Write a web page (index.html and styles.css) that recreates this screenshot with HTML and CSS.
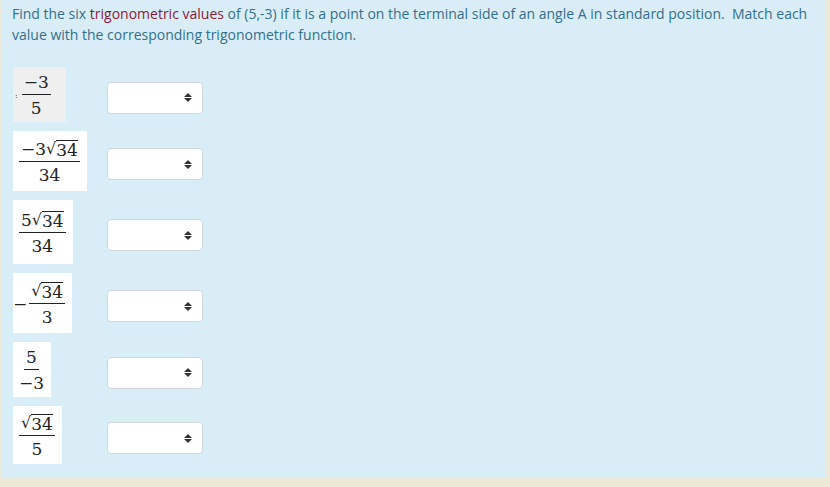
FILE: index.html
```html
<!DOCTYPE html>
<html>
<head>
    <title>Trigonometric values</title>
    <link rel="stylesheet" href="styles.css">
</head>
<body>
<div class="question">
    <p class="qtext">Find the six <span class="term">trigonometric values</span> of (5,-3) if it is a point on the terminal side of an angle A in standard position.&nbsp; Match each value with the corresponding trigonometric function.</p>

    <div class="match">
        <!-- row 1 -->
        <div class="expr expr-grey h55">
            <span class="dots">:</span>
            <span class="frac">
                <span class="num">&minus;3</span>
                <span class="den">5</span>
            </span>
        </div>
        <div class="choice"><span class="sort"><svg width="8" height="9" viewBox="0 0 8 9"><path d="M4 0L8 4H0Z"/><path d="M0 5H8L4 9Z"/></svg></span></div>

        <!-- row 2 -->
        <div class="expr h60">
            <span class="frac">
                <span class="num">&minus;3<span class="rad">&radic;</span><span class="radicand">34</span></span>
                <span class="den">34</span>
            </span>
        </div>
        <div class="choice"><span class="sort"><svg width="8" height="9" viewBox="0 0 8 9"><path d="M4 0L8 4H0Z"/><path d="M0 5H8L4 9Z"/></svg></span></div>

        <!-- row 3 -->
        <div class="expr h64">
            <span class="frac">
                <span class="num">5<span class="rad">&radic;</span><span class="radicand">34</span></span>
                <span class="den">34</span>
            </span>
        </div>
        <div class="choice"><span class="sort"><svg width="8" height="9" viewBox="0 0 8 9"><path d="M4 0L8 4H0Z"/><path d="M0 5H8L4 9Z"/></svg></span></div>

        <!-- row 4 -->
        <div class="expr h60 flush">
            <span class="sign">&minus;</span>
            <span class="frac">
                <span class="num"><span class="rad">&radic;</span><span class="radicand">34</span></span>
                <span class="den">3</span>
            </span>
        </div>
        <div class="choice"><span class="sort"><svg width="8" height="9" viewBox="0 0 8 9"><path d="M4 0L8 4H0Z"/><path d="M0 5H8L4 9Z"/></svg></span></div>

        <!-- row 5 -->
        <div class="expr h55">
            <span class="frac">
                <span class="num">5</span>
                <span class="den">&minus;3</span>
            </span>
        </div>
        <div class="choice"><span class="sort"><svg width="8" height="9" viewBox="0 0 8 9"><path d="M4 0L8 4H0Z"/><path d="M0 5H8L4 9Z"/></svg></span></div>

        <!-- row 6 -->
        <div class="expr h58">
            <span class="frac">
                <span class="num"><span class="rad">&radic;</span><span class="radicand">34</span></span>
                <span class="den">5</span>
            </span>
        </div>
        <div class="choice"><span class="sort"><svg width="8" height="9" viewBox="0 0 8 9"><path d="M4 0L8 4H0Z"/><path d="M0 5H8L4 9Z"/></svg></span></div>
    </div>
</div>
</body>
</html>
```

FILE: styles.css
```css
body {
    margin: 0;
    background-color: #ece8d8;
    font-family: "Open Sans", Arial, sans-serif;
}
.question {
    width: 824px;
    height: 478px;
    margin-left: 2px;
    box-sizing: border-box;
    padding: 3px 10px 0 10px;
    background-color: #d9edf7;
}
.qtext {
    margin: 0;
    font-size: 14px;
    line-height: 21px;
    color: #31708f;
}
.term {
    color: #8b1a3a;
}
.match {
    display: grid;
    grid-template-columns: 94px 96px;
    row-gap: 9px;
    align-items: center;
    margin-top: 22px;
    margin-left: 1px;
}
/* fraction images are set in a serif face */
.match .expr {
    justify-self: start;
    display: flex;
    align-items: center;
    padding: 0 7px 0 6px;
    background: white;
    font-family: "DejaVu Serif", "Liberation Serif", serif;
    font-size: 17px;
    color: #222;
}
.match .expr-grey {
    background: #efefef;
    padding-left: 2px;
    padding-right: 15px;
}
.match .flush {
    padding-left: 0;
}
.h55 { height: 55px; }
.h58 { height: 58px; }
.h60 { height: 60px; }
.h64 { height: 64px; }
.dots {
    font-size: 8px;
    margin-right: 4px;
    margin-top: 2px;
}
.sign {
    margin-right: 2px;
    margin-top: 2px;
}
.frac {
    display: inline-flex;
    flex-direction: column;
    align-items: center;
    margin-top: 1px;
}
.num {
    display: flex;
    align-items: flex-end;
    padding: 0 2px 2px;
    border-bottom: 1px solid #222;
    line-height: 20px;
}
.den {
    padding-top: 3px;
    line-height: 20px;
}
.rad {
    font-size: 16px;
    line-height: 20px;
}
.radicand {
    border-top: 1px solid #222;
    line-height: 18px;
}
.choice {
    display: flex;
    justify-content: flex-end;
    align-items: center;
    height: 32px;
    margin-top: 6px;
    padding-right: 10px;
    box-sizing: border-box;
    background: white;
    border: 1px solid #d2d6da;
    border-radius: 4px;
}
.sort svg {
    display: block;
    fill: #333;
}
```
